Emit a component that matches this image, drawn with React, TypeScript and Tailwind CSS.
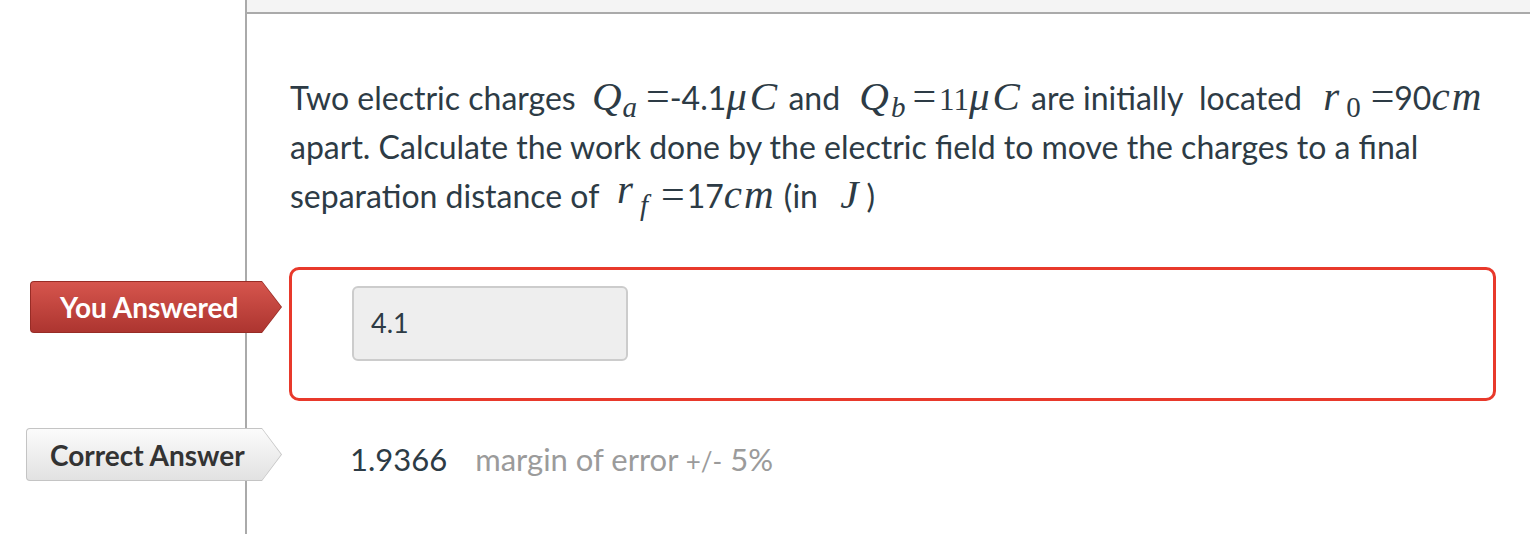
import React from 'react';

// math pieces, serif italic like MathJax output
const Var = ({ children, className = '' }: { children: React.ReactNode; className?: string }) => (
  <span className={`font-['Liberation_Serif',serif] italic text-[41px] leading-none ${className}`}>{children}</span>
);
const Eq = ({ className = '' }: { className?: string }) => (
  <span className={`font-['Liberation_Serif',serif] text-[42px] leading-none ${className}`}>=</span>
);
const Sub = ({ children, className = '' }: { children: React.ReactNode; className?: string }) => (
  <span className={`font-['Liberation_Serif',serif] italic text-[29px] leading-none relative top-[7px] ${className}`}>
    {children}
  </span>
);
const Num = ({ children }: { children: React.ReactNode }) => (
  <span className="font-['Liberation_Serif',serif] text-[31px] leading-none">{children}</span>
);

const App = () => {
  return (
    <div className="relative w-[1530px] h-[534px] bg-white overflow-hidden font-['Lato','Noto_Sans',sans-serif] text-[#2d3b45]">
      <div className="ml-[245px] h-full border-l-2 border-[#aaaaaa]">
        {/* top band */}
        <div className="h-[14px] bg-[#f4f4f4] border-b-2 border-[#aaaaaa]" />

        {/* question */}
        <div className="pl-[43px] pr-[20px] pt-[59px] text-[32px] leading-[49px]">
          <p>
            Two electric charges <Var className="ml-[8px]">Q</Var>
            <Sub className="ml-[1px]">a</Sub>
            <Eq className="ml-[9px]" />-4.1<Var className="tracking-[3px]">μC</Var> and{' '}
            <Var className="ml-[11px]">Q</Var>
            <Sub className="ml-[2px]">b</Sub>
            <Eq className="ml-[7px] mr-[3px]" />
            <Num>11</Num>
            <Var className="tracking-[3px]">μC</Var> are initially&nbsp; located{' '}
            <Var className="ml-[13px]">r</Var>
            <Sub className="ml-[7px] not-italic">0</Sub>
            <Eq className="ml-[10px]" />90<Var className="tracking-[2px]">cm</Var> apart. Calculate the work done by the
            electric field to move the charges to a final separation distance of{' '}
            <Var className="ml-[10px] relative top-[-5px]">r</Var>
            <Sub className="ml-[7px] top-[4px]">f</Sub>
            <Eq className="ml-[13px] mr-[2px]" />17<Var className="tracking-[2px]">cm</Var> (in{' '}
            <Var className="ml-[14px]">J</Var> )
          </p>
        </div>

        {/* you answered */}
        <div className="relative mt-[47px] ml-[42px] mr-[34px]">
          <div className="absolute left-[-259px] top-[14px] w-[252px] h-[52px] [clip-path:polygon(0_0,232px_0,100%_50%,232px_100%,0_100%)] rounded-l-[4px] bg-[#982c26]">
            <div className="absolute inset-[1px] [clip-path:polygon(0_0,231px_0,100%_50%,231px_100%,0_100%)] rounded-l-[3px] bg-gradient-to-b from-[#d6554d] to-[#ad3530] flex items-center pl-[29px]">
              <span className="text-white font-bold text-[28px]">You Answered</span>
            </div>
          </div>
          <div className="h-[134px] border-[3px] border-[#e8392b] rounded-[10px] pt-[16px] pl-[60px]">
            <div className="w-[276px] h-[75px] bg-[#eeeeee] border-2 border-[#cccccc] rounded-[6px] flex items-center pl-[17px] text-[27px]">
              4.1
            </div>
          </div>
        </div>

        {/* correct answer */}
        <div className="relative mt-[27px] ml-[42px] h-[53px] flex items-center pt-[10px]">
          <div className="absolute left-[-263px] top-0 w-[256px] h-[53px] [clip-path:polygon(0_0,236px_0,100%_50%,236px_100%,0_100%)] rounded-l-[4px] bg-[#c4c4c4]">
            <div className="absolute inset-[1px] [clip-path:polygon(0_0,235px_0,100%_50%,235px_100%,0_100%)] rounded-l-[3px] bg-gradient-to-b from-[#fbfbfb] to-[#e2e2e2] flex items-center pl-[23px]">
              <span className="text-[#333333] font-bold text-[28px]">Correct Answer</span>
            </div>
          </div>
          <span className="ml-[61px] text-[31px]">1.9366</span>
          <span className="ml-[28px] text-[31px] text-[#9b9b9b]">
            margin of error <span className="text-[26px]">+/-</span> 5%
          </span>
        </div>
      </div>
    </div>
  );
};

export default App;
